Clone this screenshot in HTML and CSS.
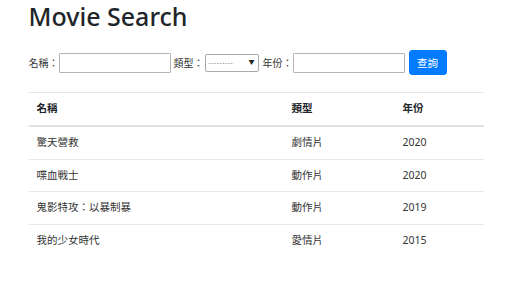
FILE: index.html
```html
<!DOCTYPE html>
<html lang="zh-Hant">
<head>
<meta charset="utf-8">
<title>Movie Search</title>
<link rel="stylesheet" href="styles.css">
</head>
<body>
<div class="container">
  <h1 class="title">Movie Search</h1>
  <form class="search">
    <label class="lbl">名稱：</label>
    <input class="field field-name" type="text">
    <label class="lbl">類型：</label>
    <div class="select"><span class="dashes">---------</span><span class="arrow">▼</span></div>
    <label class="lbl">年份：</label>
    <input class="field field-year" type="text">
    <button class="btn" type="button">查詢</button>
  </form>
  <table class="table">
    <thead>
      <tr><th class="c1">名稱</th><th class="c2">類型</th><th class="c3">年份</th></tr>
    </thead>
    <tbody>
      <tr><td>驚天營救</td><td>劇情片</td><td>2020</td></tr>
      <tr><td>喋血戰士</td><td>動作片</td><td>2020</td></tr>
      <tr><td>鬼影特攻：以暴制暴</td><td>動作片</td><td>2019</td></tr>
      <tr><td>我的少女時代</td><td>愛情片</td><td>2015</td></tr>
    </tbody>
  </table>
</div>
</body>
</html>
```
FILE: styles.css
```css
html, body {
  margin: 0;
  padding: 0;
  background: #fff;
}
body {
  font-family: "Noto Sans", "Noto Sans CJK TC", sans-serif;
  font-size: 10.5px;
  line-height: 15.8px;
  color: #212529;
}
.container {
  max-width: 475px;
  margin: 0 auto;
  padding: 0 10px;
  box-sizing: border-box;
}
.title {
  font-family: "Noto Sans", sans-serif;
  font-size: 25px;
  line-height: 33px;
  font-weight: 500;
  margin: 0 0 5px;
  color: #212529;
}
.search {
  display: flex;
  align-items: center;
  margin-top: 17px;
  height: 25px;
}
.lbl {
  font-family: "Noto Sans CJK TC", sans-serif;
  font-size: 10px;
  color: #333;
  margin-right: 0;
}
.field {
  box-sizing: border-box;
  height: 20px;
  border: 1px solid #b5b5b5;
  border-radius: 1px;
  padding: 0 2px;
  margin: 0 3px 0 0;
  background: #fff;
}
.field-name { width: 112px; }
.field-year { width: 112px; }
.select {
  box-sizing: border-box;
  width: 54px;
  height: 18px;
  border: 1px solid #aaa;
  border-radius: 2px;
  display: flex;
  align-items: center;
  justify-content: space-between;
  padding: 0 3px 0 3px;
  margin-left: 1px;
  margin-right: 4px;
  color: #555;
}
.dashes {
  font-family: "DejaVu Sans", sans-serif;
  letter-spacing: 0.6px;
  font-size: 6px;
  line-height: 10px;
}
.arrow {
  font-size: 6px;
  color: #222;
}
.btn {
  box-sizing: border-box;
  height: 25px;
  width: 38px;
  padding: 0;
  background: #007bff;
  border: 1px solid #007bff;
  border-radius: 3px;
  color: #fff;
  font-family: "Noto Sans CJK TC", sans-serif;
  font-size: 10.5px;
  margin-left: 1px;
}
.table {
  width: 100%;
  margin-top: 17px;
  border-collapse: collapse;
  font-family: "Noto Sans", "Noto Sans CJK TC", sans-serif;
}
.table th, .table td {
  padding: 8px 8px;
  text-align: left;
  border-top: 1px solid #e4e7ea;
  font-size: 10.5px;
  line-height: 15.8px;
  vertical-align: top;
}
.table thead th {
  border-bottom: 2px solid #dee2e6;
  font-weight: 700;
}
.table td { color: #333; font-weight: 400; }
.c1 { width: 239px; }
.c2 { width: 95px; }
.c3 { width: auto; }
```
